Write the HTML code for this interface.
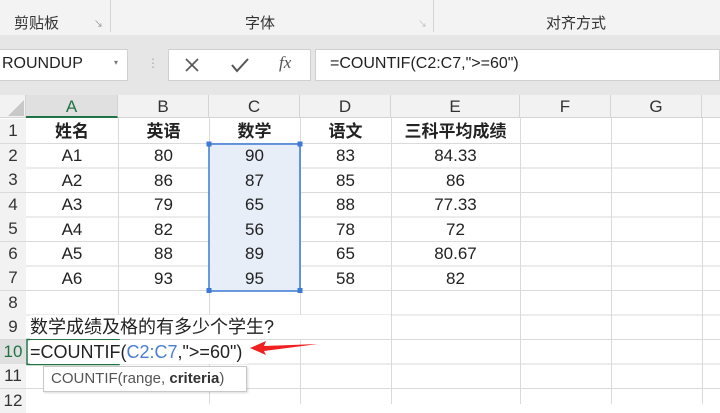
<!DOCTYPE html><html><head><meta charset="utf-8"><style>
*{margin:0;padding:0;box-sizing:border-box}
body{width:720px;height:404px;overflow:hidden;background:#fff;font-family:"Liberation Sans","Noto Sans CJK SC",sans-serif;position:relative}
.a{position:absolute}
.c{position:absolute;text-align:center;font-size:17px;color:#222;line-height:24px}
.rh{position:absolute;left:0;width:26px;text-align:center;font-size:17px;color:#333;background:#f2f2f2;line-height:24px}
.ch{position:absolute;top:95px;height:23px;text-align:center;font-size:17px;color:#333;line-height:23px;border-right:1px solid #d4d4d4}
</style></head><body>
<div class="a" style="left:0;top:0;width:720px;height:35px;background:#f3f3f3"></div>
<div class="a" style="left:14px;top:12px;font-size:15px;color:#333">剪贴板</div>
<div class="a" style="left:94px;top:17px;font-size:9px;color:#888">↘</div>
<div class="a" style="left:110px;top:0;width:1px;height:32px;background:#d4d4d4"></div>
<div class="a" style="left:245px;top:12px;font-size:15px;color:#333">字体</div>
<div class="a" style="left:418px;top:17px;font-size:9px;color:#bbb">↘</div>
<div class="a" style="left:433px;top:0;width:1px;height:32px;background:#d4d4d4"></div>
<div class="a" style="left:546px;top:12px;font-size:15px;color:#333">对齐方式</div>
<div class="a" style="left:0;top:35px;width:720px;height:60px;background:#e6e6e6"></div>
<div class="a" style="left:0;top:49px;width:128px;height:32px;background:#fff;border:1px solid #d0d0d0;border-left:none"></div>
<div class="a" style="left:2px;top:55px;font-size:16px;color:#222">ROUNDUP</div>
<div class="a" style="left:114px;top:58px;font-size:8px;color:#777">▾</div>
<div class="a" style="left:147px;top:56px;color:#aaa;font-size:12px">⋮</div>
<div class="a" style="left:168px;top:49px;width:143px;height:32px;background:#fff;border:1px solid #d0d0d0"></div>
<svg class="a" style="left:184px;top:57px" width="16" height="16"><path d="M2 2L14 14M14 2L2 14" stroke="#555" stroke-width="1.6"/></svg>
<svg class="a" style="left:230px;top:57px" width="20" height="16"><path d="M2 8L7 14L18 2" stroke="#555" stroke-width="2" fill="none"/></svg>
<div class="a" style="left:279px;top:53px;font-size:17px;color:#555;font-style:italic;font-family:'Liberation Serif',serif">fx</div>
<div class="a" style="left:315px;top:49px;width:405px;height:32px;background:#fff;border:1px solid #d0d0d0"></div>
<div class="a" style="left:330px;top:55px;font-size:16px;color:#222">=COUNTIF(C2:C7,"&gt;=60")</div>
<div class="a" style="left:0;top:95px;width:720px;height:23px;background:#f2f2f2;border-bottom:1px solid #d4d4d4"></div>
<div class="a" style="left:0;top:95px;width:26px;height:23px;border-right:1px solid #d4d4d4"></div>
<svg class="a" style="left:8px;top:100px" width="16" height="16"><polygon points="16,0 16,16 0,16" fill="#c8c8c8"/></svg>
<div class="ch" style="left:26px;width:92px;color:#217346;background:#e0e0e0;border-bottom:2px solid #217346">A</div>
<div class="ch" style="left:118px;width:91px">B</div>
<div class="ch" style="left:209px;width:91px">C</div>
<div class="ch" style="left:300px;width:91px">D</div>
<div class="ch" style="left:391px;width:129px">E</div>
<div class="ch" style="left:520px;width:91px">F</div>
<div class="ch" style="left:611px;width:91px">G</div>
<div class="a" style="left:0;top:119px;width:26px;height:285px;background:#f2f2f2;border-right:1px solid #d4d4d4"></div>
<svg class="a" style="left:0;top:0" width="720" height="404">
<g stroke="#dadada" stroke-width="1">
<line x1="0" y1="143.5" x2="720" y2="143.5"/><line x1="0" y1="168" x2="720" y2="168"/><line x1="0" y1="192.5" x2="720" y2="192.5"/><line x1="0" y1="217" x2="720" y2="217"/><line x1="0" y1="241.5" x2="720" y2="241.5"/><line x1="0" y1="266" x2="720" y2="266"/><line x1="0" y1="290.5" x2="720" y2="290.5"/><line x1="0" y1="315" x2="720" y2="315"/><line x1="0" y1="339.5" x2="720" y2="339.5"/><line x1="0" y1="364" x2="720" y2="364"/><line x1="0" y1="388.5" x2="720" y2="388.5"/>
<line x1="118.5" y1="118" x2="118.5" y2="315"/><line x1="209.5" y1="118" x2="209.5" y2="404"/><line x1="300.5" y1="118" x2="300.5" y2="404"/><line x1="391.5" y1="118" x2="391.5" y2="404"/><line x1="520.5" y1="118" x2="520.5" y2="404"/><line x1="611.5" y1="118" x2="611.5" y2="404"/><line x1="702.5" y1="118" x2="702.5" y2="404"/>
</g>
<rect x="209" y="144" width="91" height="147" fill="#e8eef8" stroke="#3b78d8" stroke-width="1.5"/>
<rect x="206.5" y="141.5" width="5" height="5" fill="#3b78d8"/><rect x="297.5" y="141.5" width="5" height="5" fill="#3b78d8"/><rect x="206.5" y="288" width="5" height="5" fill="#3b78d8"/><rect x="297.5" y="288" width="5" height="5" fill="#3b78d8"/>
<rect x="27" y="339.5" width="92" height="25" fill="none" stroke="#217346" stroke-width="1.5"/>
<polygon points="250,348 266,341 264,346 318,344 264,351 266,355" fill="#f02020"/>
</svg>
<div class="rh" style="top:119px">1</div><div class="rh" style="top:144px">2</div><div class="rh" style="top:168px">3</div><div class="rh" style="top:193px">4</div><div class="rh" style="top:217px">5</div><div class="rh" style="top:242px">6</div><div class="rh" style="top:266px">7</div><div class="rh" style="top:291px">8</div><div class="rh" style="top:315px">9</div><div class="rh" style="top:340px;color:#217346;background:#e0e0e0">10</div><div class="rh" style="top:364px">11</div><div class="rh" style="top:389px">12</div>
<div class="c" style="left:26px;width:92px;top:120px;font-weight:bold">姓名</div>
<div class="c" style="left:118px;width:91px;top:120px;font-weight:bold">英语</div>
<div class="c" style="left:209px;width:91px;top:120px;font-weight:bold">数学</div>
<div class="c" style="left:300px;width:91px;top:120px;font-weight:bold">语文</div>
<div class="c" style="left:391px;width:129px;top:120px;font-weight:bold">三科平均成绩</div>
<div class="c" style="left:26px;width:92px;top:144px">A1</div><div class="c" style="left:118px;width:91px;top:144px">80</div><div class="c" style="left:209px;width:91px;top:144px">90</div><div class="c" style="left:300px;width:91px;top:144px">83</div><div class="c" style="left:391px;width:129px;top:144px">84.33</div>
<div class="c" style="left:26px;width:92px;top:169px">A2</div><div class="c" style="left:118px;width:91px;top:169px">86</div><div class="c" style="left:209px;width:91px;top:169px">87</div><div class="c" style="left:300px;width:91px;top:169px">85</div><div class="c" style="left:391px;width:129px;top:169px">86</div>
<div class="c" style="left:26px;width:92px;top:193px">A3</div><div class="c" style="left:118px;width:91px;top:193px">79</div><div class="c" style="left:209px;width:91px;top:193px">65</div><div class="c" style="left:300px;width:91px;top:193px">88</div><div class="c" style="left:391px;width:129px;top:193px">77.33</div>
<div class="c" style="left:26px;width:92px;top:218px">A4</div><div class="c" style="left:118px;width:91px;top:218px">82</div><div class="c" style="left:209px;width:91px;top:218px">56</div><div class="c" style="left:300px;width:91px;top:218px">78</div><div class="c" style="left:391px;width:129px;top:218px">72</div>
<div class="c" style="left:26px;width:92px;top:242px">A5</div><div class="c" style="left:118px;width:91px;top:242px">88</div><div class="c" style="left:209px;width:91px;top:242px">89</div><div class="c" style="left:300px;width:91px;top:242px">65</div><div class="c" style="left:391px;width:129px;top:242px">80.67</div>
<div class="c" style="left:26px;width:92px;top:267px">A6</div><div class="c" style="left:118px;width:91px;top:267px">93</div><div class="c" style="left:209px;width:91px;top:267px">95</div><div class="c" style="left:300px;width:91px;top:267px">58</div><div class="c" style="left:391px;width:129px;top:267px">82</div>
<div class="a" style="left:30px;top:315px;width:360px;height:24px;background:#fff;font-size:18px;line-height:24px;color:#222">数学成绩及格的有多少个学生?</div>
<div class="a" style="left:30px;top:340px;width:218px;height:24px;background:#fff;font-size:18px;line-height:24px;color:#222">=COUNTIF(<span style="color:#4a7fd0">C2:C7</span>,"&gt;=60")</div>
<div class="a" style="left:43px;top:366px;width:204px;height:26px;background:#fff;border:1px solid #c8c8c8;box-shadow:1px 1px 2px rgba(0,0,0,.15);font-size:15px;line-height:24px;color:#555;padding-left:7px">COUNTIF(range, <b style="color:#333">criteria</b>)</div>
</body></html>
